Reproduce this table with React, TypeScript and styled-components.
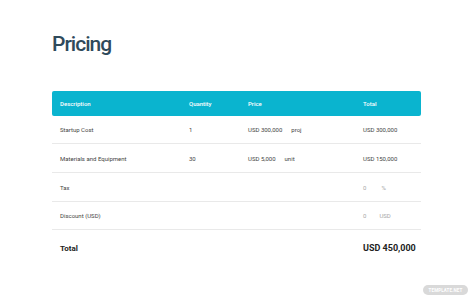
import React from "react";
import styled, { createGlobalStyle } from "styled-components";

const Global = createGlobalStyle`
  html, body { margin: 0; padding: 0; background: #ffffff; }
  body { font-family: Roboto, "Liberation Sans", sans-serif; }
`;

const Page = styled.div`
  position: relative;
  width: 474px;
  height: 301px;
  box-sizing: border-box;
  padding: 30px 0 0 52px;
  overflow: hidden;
`;

const Title = styled.h1`
  margin: 0;
  font-size: 21px;
  line-height: 28px;
  font-weight: 500;
  color: #2f4a5b;
  letter-spacing: -1px;
`;

const Table = styled.div`
  width: 369px;
  margin-top: 33px;
  display: flex;
  flex-direction: column;
`;

const Row = styled.div<{ $h: number; $head?: boolean; $line?: boolean }>`
  display: grid;
  grid-template-columns: 129px 59px 115px 1fr;
  align-items: center;
  box-sizing: border-box;
  height: ${(p) => p.$h}px;
  padding-left: 8px;
  background: ${(p) => (p.$head ? "#0ab4cf" : "transparent")};
  border-radius: ${(p) => (p.$head ? "2px" : "0")};
  border-bottom: ${(p) => (p.$line ? "1px solid #e9e9e9" : "none")};
  color: ${(p) => (p.$head ? "#ffffff" : "#444444")};
  font-size: 6px;
  font-weight: ${(p) => (p.$head ? 500 : 400)};
`;

const Cell = styled.div<{ $gap?: number }>`
  display: flex;
  align-items: center;
  gap: ${(p) => p.$gap ?? 9}px;
  white-space: nowrap;
`;

const Muted = styled.span`
  color: #a8a8a8;
`;

const TotalLabel = styled.div`
  font-size: 8px;
  font-weight: 700;
  color: #222;
`;

const TotalValue = styled.div`
  font-size: 9px;
  font-weight: 700;
  color: #222;
  white-space: nowrap;
`;

const Badge = styled.div`
  position: absolute;
  left: 423px;
  top: 285px;
  width: 45px;
  height: 10px;
  border-radius: 5px;
  background: #d9d9d9;
  color: #ffffff;
  font-size: 4.5px;
  font-weight: 700;
  display: flex;
  align-items: center;
  justify-content: center;
  letter-spacing: 0.1px;
`;

export default function App() {
  return (
    <>
      <Global />
      <Page>
        <Title>Pricing</Title>
        <Table>
          <Row $h={25} $head>
            <Cell>Description</Cell>
            <Cell>Quantity</Cell>
            <Cell>Price</Cell>
            <Cell>Total</Cell>
          </Row>
          <Row $h={28} $line>
            <Cell>Startup Cost</Cell>
            <Cell>1</Cell>
            <Cell>
              <span>USD 300,000</span>
              <span>proj</span>
            </Cell>
            <Cell>USD 300,000</Cell>
          </Row>
          <Row $h={29} $line>
            <Cell>Materials and Equipment</Cell>
            <Cell>30</Cell>
            <Cell>
              <span>USD 5,000</span>
              <span>unit</span>
            </Cell>
            <Cell>USD 150,000</Cell>
          </Row>
          <Row $h={29} $line>
            <Cell>Tax</Cell>
            <Cell />
            <Cell />
            <Cell $gap={15}>
              <Muted>0</Muted>
              <Muted>%</Muted>
            </Cell>
          </Row>
          <Row $h={28} $line>
            <Cell>Discount (USD)</Cell>
            <Cell />
            <Cell />
            <Cell $gap={13}>
              <Muted>0</Muted>
              <Muted>USD</Muted>
            </Cell>
          </Row>
          <Row $h={36}>
            <TotalLabel>Total</TotalLabel>
            <Cell />
            <Cell />
            <TotalValue>USD 450,000</TotalValue>
          </Row>
        </Table>
        <Badge>TEMPLATE.NET</Badge>
      </Page>
    </>
  );
}
